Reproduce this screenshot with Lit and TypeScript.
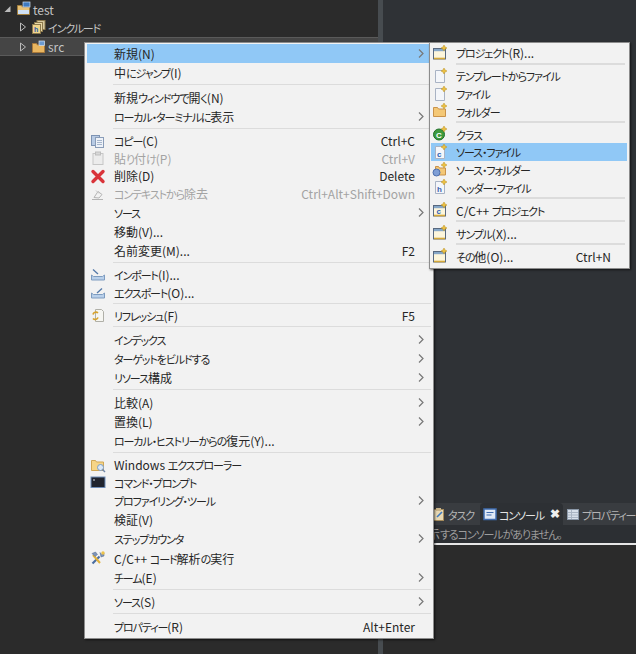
import { LitElement, html, css, svg, nothing } from "lit";
import { customElement } from "lit/decorators.js";

const star = svg`<path d="M12 0l1 2 2 1-2 1-1 2-1-2-2-1 2-1z" fill="#edc03f" stroke="#b98f1f" stroke-width=".5"/>`;
const file = (inner: any = nothing) => svg`<path d="M3.500 2.500h7l2 2v10h-9z" fill="#f4f6fa" stroke="#a9b3c4"/>${inner}${star}`;
const win = (inner: any = nothing) => svg`<rect x="1.500" y="3.500" width="12" height="10.500" fill="#fdf6dc" stroke="#59697f"/><rect x="2" y="4" width="11" height="2.200" fill="#86a7c8"/><path d="M2 13.500h11" stroke="#d4a93b" stroke-width="1.600"/>${inner}${star}`;
const folder = (inner: any = nothing) => svg`<path d="M1.500 13.500v-9h4l1 1.500h7v7.500z" fill="#f4c876" stroke="#c9924a"/>${inner}${star}`;
const letter = (x: number, y: number, c: string, col = "#2b5fb3") => svg`<text x=${x} y=${y} font-family="Liberation Sans" font-size="8" font-weight="700" fill=${col}>${c}</text>`;

const icons: Record<string, any> = {
  project: win(),
  file: file(),
  folderNew: folder(),
  cls: svg`<circle cx="7" cy="8.500" r="5.500" fill="#3d9a3d" stroke="#21702a"/>${letter(4, 11.500, "C", "#fff")}${star}`,
  src: file(letter(5, 12.500, "c")),
  srcFolder: svg`<path d="M3.500 11v-6.500h3l1 1.500h6v7h-6z" fill="#f4c876" stroke="#c9924a"/><circle cx="4.500" cy="10.500" r="3.500" fill="#7f9fd6" stroke="#4d6fae"/>${star}`,
  header: file(letter(5, 12.500, "h", "#3b5fae")),
  cpp: win(letter(4.500, 12, "c")),
  copy: svg`<rect x="1.500" y="2.500" width="8" height="10" fill="#b8cbe4" stroke="#7d93b3"/><rect x="5.500" y="4.500" width="8" height="10" fill="#eef2f8" stroke="#8a9db8"/><path d="M7 7.500h5M7 9.500h5M7 11.500h5" stroke="#a6b6cc"/>`,
  paste: svg`<rect x="3" y="3.500" width="10" height="11" fill="#ececec" stroke="#c6c6c6"/><rect x="5.500" y="2" width="5" height="3" fill="#d8d8d8" stroke="#bdbdbd"/>`,
  del: svg`<path d="M3 3.500l10 10M13 3.500l-10 10" stroke="#d9343a" stroke-width="3.400" stroke-linecap="round"/>`,
  ctx: svg`<path d="M4 11.500l4-6 4 3-3 3.500zM2 13.500h11" fill="none" stroke="#b4b4b4"/><path d="M6 4.500l3 3" stroke="#c6c6c6"/>`,
  imp: svg`<path d="M1.500 9v5h13V9l-2 1.500h-9z" fill="#b9d0ea" stroke="#7e9cc0"/><path d="M3 3.500l5 4.500" stroke="#5278a8" stroke-width="1.300"/>`,
  exp: svg`<path d="M1.500 9v5h13V9l-2 1.500h-9z" fill="#b9d0ea" stroke="#7e9cc0"/><path d="M7 9l5-4.500" stroke="#5278a8" stroke-width="1.300"/>`,
  refresh: svg`<path d="M5.500 2.500h6l2 2v10h-8z" fill="#f6f6f2" stroke="#b0b0a8"/><path d="M3 7.500a3 3 0 0 1 5-1.500M8 10.500a3 3 0 0 1-5 1" fill="none" stroke="#d6a22c" stroke-width="1.700"/>`,
  explorer: svg`<path d="M1.500 13.500v-10h4l1 1.500h7v8.500z" fill="#f6d587" stroke="#d0a755"/><circle cx="10.500" cy="10.500" r="3" fill="#dbe9f8" stroke="#7b9cc6"/><path d="M12.500 12.500l2.500 2.500" stroke="#6f86a8" stroke-width="1.400"/>`,
  cmd: svg`<rect x="1" y="3" width="14" height="10.500" fill="#20242e" stroke="#6e8db8"/><path d="M3 6h2" stroke="#d8dde6"/>`,
  analysis: svg`<path d="M2.500 13.500l7-7" stroke="#4a6da0" stroke-width="2.200"/><path d="M3 5l7 8" stroke="#e2b23c" stroke-width="2"/><path d="M2 3.500l3 3 2.500-2-2-2.500zM10 2.500l2 2 2-1.500v3l-3 1z" fill="#7c93b8" stroke="#52688c" stroke-width=".5"/><circle cx="13" cy="3" r="1.700" fill="#edc34a"/>`,
};

const ico = (name: string) => html`<svg class="ic" width="16" height="16" viewBox="0 0 16 16">${icons[name]}</svg>`;

/* The reference's UI font has condensed kana next to full-width kanji. */
const tx = (text: string) =>
  text.split(/([\u3040-\u30ff\u30fb\u30fc\u3002]+)/).map((part, i) => (i % 2 ? html`<span class="kana">${part}</span>` : part));

type R = { t: string; k?: string; i?: string; sub?: boolean; off?: boolean; hi?: boolean; tall?: boolean; short?: boolean };
const S = { sep: true } as const;

const main: (R | typeof S)[] = [
  { t: "新規(N)", sub: true, hi: true, tall: true },
  { t: "中にジャンプ(I)", tall: true },
  S,
  { t: "新規ウィンドウで開く(N)", tall: true },
  { t: "ローカル・ターミナルに表示", sub: true, tall: true },
  S,
  { t: "コピー(C)", k: "Ctrl+C", i: "copy", short: true },
  { t: "貼り付け(P)", k: "Ctrl+V", i: "paste", off: true, short: true },
  { t: "削除(D)", k: "Delete", i: "del", short: true },
  { t: "コンテキストから除去", k: "Ctrl+Alt+Shift+Down", i: "ctx", off: true, short: true },
  { t: "ソース", sub: true, tall: true },
  { t: "移動(V)...", tall: true },
  { t: "名前変更(M)...", k: "F2", tall: true },
  S,
  { t: "インポート(I)...", i: "imp", short: true },
  { t: "エクスポート(O)...", i: "exp", short: true },
  S,
  { t: "リフレッシュ(F)", k: "F5", i: "refresh", short: true },
  S,
  { t: "インデックス", sub: true, tall: true },
  { t: "ターゲットをビルドする", sub: true, tall: true },
  { t: "リソース構成", sub: true, tall: true },
  S,
  { t: "比較(A)", sub: true, tall: true },
  { t: "置換(L)", sub: true, tall: true },
  { t: "ローカル・ヒストリーからの復元(Y)...", tall: true },
  S,
  { t: "Windows エクスプローラー", i: "explorer", short: true },
  { t: "コマンド・プロンプト", i: "cmd", short: true },
  { t: "プロファイリング・ツール", sub: true, tall: true },
  { t: "検証(V)", tall: true },
  { t: "ステップカウンタ", sub: true, tall: true },
  { t: "C/C++ コード解析の実行", i: "analysis", tall: true },
  { t: "チーム(E)", sub: true, tall: true },
  S,
  { t: "ソース(S)", sub: true, tall: true },
  S,
  { t: "プロパティー(R)", k: "Alt+Enter", tall: true },
];

const subm: (R | typeof S)[] = [
  { t: "プロジェクト(R)...", i: "project", short: true },
  S,
  { t: "テンプレートからファイル", i: "file", short: true },
  { t: "ファイル", i: "file", short: true },
  { t: "フォルダー", i: "folderNew", short: true },
  S,
  { t: "クラス", i: "cls", short: true },
  { t: "ソース・ファイル", i: "src", hi: true, short: true },
  { t: "ソース・フォルダー", i: "srcFolder", short: true },
  { t: "ヘッダー・ファイル", i: "header", short: true },
  S,
  { t: "C/C++ プロジェクト", i: "cpp", short: true },
  S,
  { t: "サンプル(X)...", i: "project", short: true },
  S,
  { t: "その他(O)...", k: "Ctrl+N", i: "project", short: true },
];

@customElement("app-root")
export class AppRoot extends LitElement {
  static styles = css`
    :host { display: block; width: 636px; height: 654px; position: relative; overflow: hidden; background: #2f2f2f;
      font-family: "Noto Sans CJK JP", "Liberation Sans", sans-serif; font-size: 12px; color: #262626; font-feature-settings: "palt"; }
    .kana { font-size: 11px; letter-spacing: -1.100px; }
    svg { flex: none; }
    .frame { display: grid; grid-template-columns: 378px 5px 1fr; height: 654px; }
    .tree { background: #2b2b2b; color: #c4c4c4; }
    .node { display: flex; align-items: center; height: 18px; gap: 4px; }
    .node.n1 { padding-left: 4px; }
    .node.n2 { padding-left: 19px; }
    .lbl { margin-left: -3px; }
    .node.sel { background: #454545; border-top: 1px solid #5a5a5a; border-bottom: 1px solid #5a5a5a; box-sizing: border-box; height: 19px; margin-top: 1px; }
    .arrow { width: 8px; height: 10px; display: flex; align-items: center; }
    .gutter { background: #474c50; }
    .right { display: flex; flex-direction: column; background: #2f3236; }
    .spacer { height: 503px; }
    .tabs { display: flex; align-items: flex-end; height: 22px; padding-left: 43px; background: #393c40; color: #b4b4b4; overflow: hidden; }
    .tab { display: flex; align-items: center; gap: 1px; height: 22px; padding: 0 2px 0 5px; white-space: nowrap; width: 54px; box-sizing: border-box; flex: none; }
    .tab.on { background: #2d3034; color: #e4e4e4; border-radius: 4px 4px 0 0; padding: 0 0 0 2px; width: 83px; }
    .tab.last { padding-left: 2px; width: auto; }
    .x { font-weight: 700; color: #eee; margin-left: 5px; font-family: "Liberation Sans", sans-serif; }
    .msg { height: 20px; line-height: 18px; background: #2c2f33; color: #9c9c9c; border-bottom: 2px solid #e6e6e6; box-sizing: border-box; white-space: nowrap; overflow: hidden; padding-left: 45px; }
    .rest { flex: 1; background: #2b2b2b; }
    .menu { position: absolute; background: #f2f2f2; border: 1px solid #8c8c8c; box-shadow: 1px 1px 2px rgba(0,0,0,.6); padding: 1px 2px; box-sizing: border-box; }
    .m1 { left: 84px; top: 42px; width: 350px; height: 597px; }
    .m2 { left: 429px; top: 42px; width: 201px; height: 227px; padding: 1px 2px 1px 1px; }
    .row { display: grid; grid-template-columns: 27px 1fr auto 16px; align-items: center; white-space: nowrap; }
    .row.tall { height: 19.100px; }
    .row.short { height: 17.700px; }
    .m2 .row { grid-template-columns: 25px 1fr auto 16px; }
    .row.hi { background: #90c8f6; }
    .row.off { color: #a3a3a3; }
    .cell { display: flex; align-items: center; padding-left: 3px; }
    .m2 .cell { padding-left: 1px; }
    .ic { display: block; }
    .key { text-align: right; }
    .chev { display: flex; padding-left: 3px; }
    .sep { height: 1px; background: #dcdcdc; margin: 2px 0 2.700px 26px; }
    .m2 .sep { margin: 1px 2px 2.300px 25px; height: 2px; }
  `;

  private renderRows(rows: (R | typeof S)[]) {
    return rows.map((r) => {
      if ("sep" in r) return html`<div class="sep"></div>`;
      const cls = `row${r.hi ? " hi" : ""}${r.off ? " off" : ""}${r.tall ? " tall" : ""}${r.short ? " short" : ""}`;
      return html`<div class=${cls}>
        <div class="cell">${r.i ? ico(r.i) : nothing}</div>
        <div>${tx(r.t)}</div>
        <div class="key">${r.k ?? ""}</div>
        <div class="chev">${r.sub ? html`<svg width="6" height="9" viewBox="0 0 6 9"><path d="M1 .5l4 4-4 4" fill="none" stroke="#777" stroke-width="1.200"/></svg>` : nothing}</div>
      </div>`;
    });
  }

  render() {
    return html`
      <div class="frame">
        <div class="tree">
          <div class="node n1">
            <span class="arrow"><svg width="8" height="8" viewBox="0 0 8 8"><path d="M6.500 1v6h-6z" fill="#bbb"/></svg></span>
            <svg width="16" height="16" viewBox="0 0 16 16"><path d="M1.500 13.500v-9h4l1 1.500h7v7.500z" fill="#e8c176" stroke="#a37f3c"/><rect x="7" y="1" width="7" height="5" fill="#3f7ac0" stroke="#cfe0f4" stroke-width=".7"/><path d="M2 9h11v4H2z" fill="#cfe0f4"/></svg>
            <span class="lbl">test</span>
          </div>
          <div class="node n2">
            <span class="arrow"><svg width="8" height="10" viewBox="0 0 8 10"><path d="M1.500 1l5 4-5 4z" fill="none" stroke="#bbb"/></svg></span>
            <svg width="16" height="16" viewBox="0 0 16 16"><rect x="6" y="1.500" width="8" height="9" fill="#d8c9a0" stroke="#8d7a4d"/><rect x="3.500" y="3.500" width="8" height="9" fill="#ead9a8" stroke="#8d7a4d"/><rect x="1.500" y="5.500" width="8" height="9" fill="#f0d48c" stroke="#8d7a4d"/><text x="3" y="13" font-size="7" font-weight="700" fill="#2a5ca8" font-family="Liberation Sans">h</text></svg>
            <span class="lbl">${tx("インクルード")}</span>
          </div>
          <div class="node n2 sel">
            <span class="arrow"><svg width="8" height="10" viewBox="0 0 8 10"><path d="M1.500 1l5 4-5 4z" fill="none" stroke="#bbb"/></svg></span>
            <svg width="16" height="16" viewBox="0 0 16 16"><path d="M1.500 13.500v-9h4l1 1.500h7v7.500z" fill="#e9b660" stroke="#a9793a"/><rect x="8" y="2" width="5.500" height="4.500" fill="#6b9ad0" stroke="#d9e6f4" stroke-width=".7"/></svg>
            <span class="lbl">src</span>
          </div>
        </div>
        <div class="gutter"></div>
        <div class="right">
          <div class="spacer"></div>
          <div class="tabs">
            <div class="tab">
              <svg width="16" height="16" viewBox="0 0 16 16"><rect x="2.500" y="3.500" width="10" height="11" fill="#e8d9b4" stroke="#a48b5c"/><rect x="5" y="2" width="5" height="3" fill="#c9b489"/><path d="M6 11l5-5" stroke="#3f7ac0" stroke-width="1.600"/></svg>
              <span>${tx("タスク")}</span>
            </div>
            <div class="tab on">
              <svg width="16" height="16" viewBox="0 0 16 16"><rect x="2" y="3" width="12" height="10.500" fill="#dfe8f6" stroke="#3f6cb0" stroke-width="1.500"/><path d="M4.500 6.500h7M4.500 9h5" stroke="#3f6cb0"/></svg>
              <span>${tx("コンソール")}</span><span class="x">✖</span>
            </div>
            <div class="tab last">
              <svg width="16" height="16" viewBox="0 0 16 16"><rect x="2.500" y="3.500" width="11" height="10" fill="#d7dfe9" stroke="#8b98a8"/><path d="M3 6.500h10M3 9h10M3 11.500h10M6.500 4v9" stroke="#a9b4c2"/></svg>
              <span>${tx("プロパティー")}</span>
            </div>
          </div>
          <div class="msg">${tx("示するコンソールがありません。")}</div>
          <div class="rest"></div>
        </div>
      </div>
      <div class="menu m1">${this.renderRows(main)}</div>
      <div class="menu m2">${this.renderRows(subm)}</div>
    `;
  }
}
